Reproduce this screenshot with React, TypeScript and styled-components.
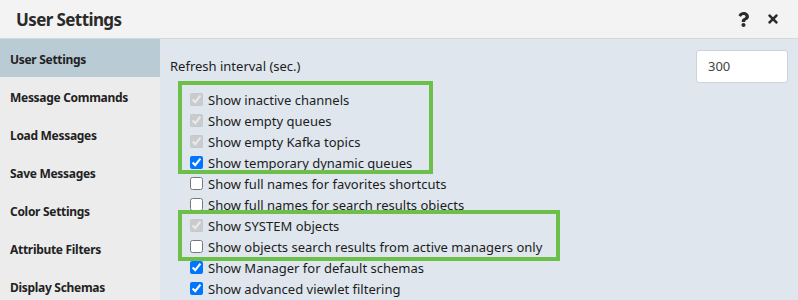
import styled, { createGlobalStyle } from "styled-components";
import { FaQuestion, FaTimes } from "react-icons/fa";

const GlobalStyle = createGlobalStyle`
  html, body {
    margin: 0;
    padding: 0;
    background: #dfe6ee;
  }
  body {
    font-family: "Noto Sans", "Open Sans", sans-serif;
    color: #1c1c1c;
  }
`;

const Window = styled.div`
  width: 798px;
  height: 300px;
  display: flex;
  flex-direction: column;
  overflow: hidden;
`;

const Header = styled.header`
  height: 38px;
  flex: none;
  display: flex;
  align-items: center;
  justify-content: space-between;
  padding: 0 18px 0 16px;
  background: #f3f3f3;
  border-bottom: 1px solid #d3d8dd;
`;

const Title = styled.h1`
  margin: 0;
  font-size: 17px;
  font-weight: 700;
  letter-spacing: -0.6px;
  color: #2a2a2a;
`;

const Tools = styled.div`
  display: flex;
  align-items: center;
  gap: 15px;
  color: #2b2b2b;
`;

const Body = styled.div`
  flex: 1;
  display: flex;
  min-height: 0;
`;

const Sidebar = styled.nav`
  width: 160px;
  flex: none;
  background: #ececec;
  display: flex;
  flex-direction: column;
`;

const NavItem = styled.div<{ $active?: boolean }>`
  height: 38px;
  flex: none;
  display: flex;
  align-items: center;
  padding: 2px 0 0 10px;
  box-sizing: border-box;
  font-size: 12px;
  font-weight: 700;
  letter-spacing: -0.3px;
  color: #222;
  background: ${(p) => (p.$active ? "#b9ccd5" : "transparent")};
`;

const Main = styled.main`
  flex: 1;
  padding: 10px 10px 0 10px;
`;

const RefreshRow = styled.div`
  display: flex;
  align-items: center;
  justify-content: space-between;
  height: 34px;
  margin-bottom: 6px;
  font-size: 13px;
`;

const NumberInput = styled.input`
  width: 92px;
  height: 33px;
  box-sizing: border-box;
  border: 1px solid #cdd3da;
  border-radius: 3px;
  padding: 0 11px;
  font-family: inherit;
  font-size: 13px;
  color: #444;
  background: #fff;
`;

const Options = styled.div`
  padding-left: 20px;
`;

const Group = styled.div`
  position: relative;
`;

const Frame = styled.div<{ $width: number; $top: number; $bottom: number }>`
  position: absolute;
  left: -12px;
  top: ${(p) => -p.$top}px;
  bottom: ${(p) => -p.$bottom}px;
  width: ${(p) => p.$width}px;
  box-sizing: border-box;
  border: 4px solid #6cc04a;
  pointer-events: none;
`;

const Row = styled.label`
  height: 21px;
  display: flex;
  align-items: center;
  gap: 5px;
  font-size: 13px;
  white-space: nowrap;
`;

const Check = styled.input`
  width: 13px;
  height: 13px;
  margin: 0;
  flex: none;
`;

type Opt = { label: string; checked: boolean; disabled?: boolean };

const group1: Opt[] = [
  { label: "Show inactive channels", checked: true, disabled: true },
  { label: "Show empty queues", checked: true, disabled: true },
  { label: "Show empty Kafka topics", checked: true, disabled: true },
  { label: "Show temporary dynamic queues", checked: true },
];

const plain1: Opt[] = [
  { label: "Show full names for favorites shortcuts", checked: false },
  { label: "Show full names for search results objects", checked: false },
];

const group2: Opt[] = [
  { label: "Show SYSTEM objects", checked: true, disabled: true },
  { label: "Show objects search results from active managers only", checked: false },
];

const plain2: Opt[] = [
  { label: "Show Manager for default schemas", checked: true },
  { label: "Show advanced viewlet filtering", checked: true },
];

const nav = [
  "User Settings",
  "Message Commands",
  "Load Messages",
  "Save Messages",
  "Color Settings",
  "Attribute Filters",
  "Display Schemas",
];

const renderRows = (rows: Opt[]) =>
  rows.map((o) => (
    <Row key={o.label}>
      <Check type="checkbox" defaultChecked={o.checked} disabled={o.disabled} />
      {o.label}
    </Row>
  ));

export default function App() {
  return (
    <Window>
      <GlobalStyle />
      <Header>
        <Title>User Settings</Title>
        <Tools>
          <FaQuestion size={15} />
          <FaTimes size={14} />
        </Tools>
      </Header>
      <Body>
        <Sidebar>
          {nav.map((n, i) => (
            <NavItem key={n} $active={i === 0}>
              {n}
            </NavItem>
          ))}
        </Sidebar>
        <Main>
          <RefreshRow>
            <span>Refresh interval (sec.)</span>
            <NumberInput defaultValue="300" />
          </RefreshRow>
          <Options>
            <Group>
              <Frame $width={255} $top={8} $bottom={1} />
              {renderRows(group1)}
            </Group>
            {renderRows(plain1)}
            <Group>
              <Frame $width={382} $top={5} $bottom={4} />
              {renderRows(group2)}
            </Group>
            {renderRows(plain2)}
          </Options>
        </Main>
      </Body>
    </Window>
  );
}
